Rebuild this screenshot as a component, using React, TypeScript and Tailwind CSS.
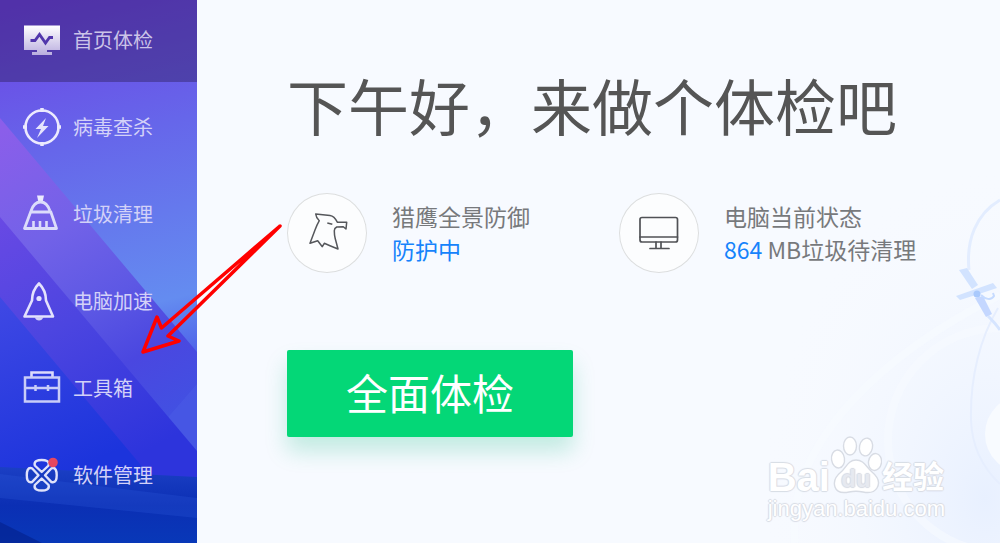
import type { ReactNode } from "react";

const iconStroke = {
  fill: "none",
  stroke: "#dcdcfb",
  strokeWidth: 2.6,
  strokeLinejoin: "round" as const,
};

function CheckupIcon() {
  return (
    <svg viewBox="0 0 40 40" className="size-10" aria-hidden="true">
      <defs>
        <linearGradient id="screen" x1="0" y1="0" x2="0" y2="1">
          <stop offset="0" stopColor="#ffffff" />
          <stop offset="1" stopColor="#b9addf" />
        </linearGradient>
      </defs>
      <path d="M2 5.500h36v24.500H25v2h5v3H10v-3h5v-2H2z" fill="url(#screen)" />
      <path d="M8.500 20.500h4.500l4.500-6 6 8.500 4-5.500h3.500" fill="none" stroke="#5136ac" strokeWidth="2.800" />
    </svg>
  );
}

function VirusIcon() {
  return (
    <svg viewBox="0 0 40 40" className="size-10" aria-hidden="true">
      <circle cx="20" cy="20" r="16.500" {...iconStroke} stroke="#eceafe" />
      <path d="M20 1v4M20 35v4M1 20h4M35 20h4" {...iconStroke} strokeWidth="3.500" stroke="#eceafe" />
      <path d="M24 11 13.500 22h5.500l-4 9L26.500 19H21z" fill="#e6e4fd" />
    </svg>
  );
}

function BroomIcon() {
  return (
    <svg viewBox="0 0 40 40" className="size-10" aria-hidden="true">
      <path d="M15 1.500h7l-1.500 7h-4z" fill="#eceafe" />
      <path d="M9 17c2-6 5-9 9.500-9s7.500 3 9.500 9M8.500 18h20M9 17 2.500 34.500h32L28.500 17" {...iconStroke} strokeWidth="2.800" />
      <path d="M11.500 27v7M18 27v7M24.500 27v7" {...iconStroke} />
    </svg>
  );
}

function RocketIcon() {
  return (
    <svg viewBox="0 0 40 40" className="size-10" aria-hidden="true">
      <path
        d="M17 2.500c-5 5-7 10-7 17L2.500 35.500h28.500L24 19.500c0-7-2-12-7-17z"
        {...iconStroke}
        stroke="#e4e2fd"
      />
      <circle cx="17" cy="17.500" r="2.600" fill="#e4e2fd" />
      <path d="M12.500 36h9q-1.500 3.500-4.500 3.500t-4.500-3.500z" fill="#d3d0f8" />
    </svg>
  );
}

function ToolboxIcon() {
  return (
    <svg viewBox="0 0 40 40" className="size-10" aria-hidden="true">
      <path d="M9.500 9.500V4.500h21v5" {...iconStroke} strokeLinejoin="miter" />
      <path
        d="M3 9.500h34V33.500H3zM3 20h34M13.500 17v6M26 17v6"
        {...iconStroke}
        strokeWidth="2.500"
        strokeLinejoin="miter"
        stroke="#c9cdf8"
      />
    </svg>
  );
}

function SoftwareIcon() {
  return (
    <svg viewBox="0 0 40 40" className="size-10" aria-hidden="true">
      <g {...iconStroke} strokeWidth="2.400" stroke="#dfe2fb">
        <path d="M19.700 17 12.800 10.500C11.500 6 16 5 19.700 5s8.200 1 6.900 5.500z" />
        <path d="M19.700 23.500 12.800 30C11.500 34.500 16 35.500 19.700 35.500s8.200-1 6.900-5.500z" />
        <path d="M16.500 20.200 10 13.300C5.500 12 4.800 16.500 4.800 20.200s.7 8.200 5.200 6.900z" />
        <path d="M23 20.200l6.500-6.900c4.500-1.300 5.200 3.200 5.200 6.900s-.7 8.200-5.200 6.900z" />
      </g>
      <circle cx="31" cy="7.500" r="4.800" fill="#e7475f" />
    </svg>
  );
}

const navItems: { label: string; icon: ReactNode }[] = [
  { label: "病毒查杀", icon: <VirusIcon /> },
  { label: "垃圾清理", icon: <BroomIcon /> },
  { label: "电脑加速", icon: <RocketIcon /> },
  { label: "工具箱", icon: <ToolboxIcon /> },
  { label: "软件管理", icon: <SoftwareIcon /> },
];

function SidebarArt() {
  return (
    <svg
      viewBox="0 0 197 543"
      preserveAspectRatio="none"
      className="absolute inset-0 size-full"
      aria-hidden="true"
    >
      <defs>
        <linearGradient id="sky" gradientUnits="userSpaceOnUse" x1="40" y1="0" x2="160" y2="480">
          <stop offset="0" stopColor="#6d42e4" />
          <stop offset="0.3" stopColor="#6666ea" />
          <stop offset="0.65" stopColor="#648cf0" />
          <stop offset="0.78" stopColor="#4c5ee8" />
          <stop offset="1" stopColor="#2f3fdc" />
        </linearGradient>
        <linearGradient id="bandA" gradientUnits="userSpaceOnUse" x1="0" y1="130" x2="160" y2="420">
          <stop offset="0" stopColor="#8b5eea" />
          <stop offset="0.35" stopColor="#7262e8" />
          <stop offset="0.6" stopColor="#5d58e4" />
          <stop offset="0.8" stopColor="#4a47e0" />
          <stop offset="1" stopColor="#4250e2" />
        </linearGradient>
        <linearGradient id="bandB" gradientUnits="userSpaceOnUse" x1="0" y1="220" x2="130" y2="460">
          <stop offset="0" stopColor="#6849e4" />
          <stop offset="0.45" stopColor="#4c45e0" />
          <stop offset="1" stopColor="#2d34dc" />
        </linearGradient>
        <linearGradient id="bandC" gradientUnits="userSpaceOnUse" x1="0" y1="300" x2="70" y2="470">
          <stop offset="0" stopColor="#3f48e4" />
          <stop offset="1" stopColor="#1c34dc" />
        </linearGradient>
        <linearGradient id="sea" x1="0" y1="0" x2="0" y2="1">
          <stop offset="0" stopColor="#1b3fc4" />
          <stop offset="0.5" stopColor="#0b2fb4" />
          <stop offset="1" stopColor="#0838b8" />
        </linearGradient>
      </defs>
      <path d="M0 0h197v543H0z" fill="url(#sky)" />
      <path d="M0 118 197 352V543H0z" fill="url(#bandA)" />
      <path d="M197 384 138 452 197 480z" fill="#5468ea" opacity="0.25" />
      <path d="M0 217 197 451V543H0z" fill="url(#bandB)" />
      <path d="M0 297 150 476V543H0z" fill="url(#bandC)" />
      <path d="M0 467 197 477v66H0z" fill="url(#sea)" />
      <path d="M0 474 197 498v20L0 498z" fill="#2a55d6" opacity="0.3" />
      <path d="M0 522 42 543H0z" fill="#03208a" opacity="0.6" />
    </svg>
  );
}

function MainArt() {
  return (
    <svg viewBox="0 0 300 543" className="absolute top-0 right-0 w-[300px]" fill="none" aria-hidden="true">
      <defs>
        <radialGradient id="glow" cx="0.95" cy="0.9" r="0.75">
          <stop offset="0" stopColor="#e8f0ff" />
          <stop offset="1" stopColor="#f7faff" stopOpacity="0" />
        </radialGradient>
      </defs>
      <path d="M0 100h300v443H0z" fill="url(#glow)" />
      <path d="M95 543C84 440 190 350 300 295" stroke="#f8fbff" strokeWidth="8" opacity="0.5" />
      <circle cx="300" cy="440" r="112" stroke="#f7faff" strokeWidth="8" opacity="0.6" />
      <circle cx="324" cy="434" r="39" fill="#f8fbff" />
      <path d="M300 200c-24 14-34 40-31 70" stroke="#e3edff" strokeWidth="3" />
      <path d="M298 308c-18 30-28 70-27 112 1 30 14 50 29 64" stroke="#e6eefe" strokeWidth="2" />
      <path d="M288 316c4 4 8 8 12 14" stroke="#d6e5ff" strokeWidth="3" />
      <path d="M259 270l8-2 11 17-6 4z" fill="#d2e3ff" />
      <path d="M275 298l8-2 9 18-6 3z" fill="#c4d7ff" />
      <path d="M256 296l17-6 20-7 4 5-18 6-19 6z" fill="#d2e3ff" />
      <circle cx="277" cy="294" r="3.500" fill="#a9c9fc" />
      <path d="M281 295c4 4 10 6 13 1l-1-3" stroke="#c6dbff" strokeWidth="2" />
    </svg>
  );
}

function EagleIcon() {
  return (
    <svg viewBox="0 0 80 80" className="size-20" fill="none" stroke="#55575b" strokeWidth="1.500" strokeLinejoin="round" aria-hidden="true">
      <path d="M28.700 21 43 22.500c4 .5 5.500 3 7.300 6.700h9.400L59 36l-2.700-2.300-6.600.3c-1.700.8-2.400 2-2.400 3.700 0 3 .2 5 .9 7.800L51 56l-8-3.300-5.700-2.400-2 3.400-4.600-6-7.700 2.600L28 37c1.500-4 3-7 4.300-9.300-2-1.700-3.300-4-3.600-6.700z" />
      <path d="M40.300 30l5 1.300" />
    </svg>
  );
}

function MonitorIcon() {
  return (
    <svg viewBox="0 0 80 80" className="size-20" fill="none" stroke="#505256" strokeWidth="1.700" strokeLinecap="round" aria-hidden="true">
      <rect x="21" y="24.500" width="37.500" height="24.500" rx="2" />
      <path d="M21 44h37.500M37 49v6M42 49v6M31 55.500h19" />
    </svg>
  );
}

function Status({ icon, title, children }: { icon: ReactNode; title: string; children: ReactNode }) {
  return (
    <section className="flex items-center gap-[25px]">
      <div className="size-20 shrink-0 rounded-full bg-[#fcfdfe] shadow-[inset_0_0_0_1px_#dcdedf]">{icon}</div>
      <div className="text-[23px] leading-[33px] whitespace-nowrap text-[#77797c]">
        <h2>{title}</h2>
        <p>{children}</p>
      </div>
    </section>
  );
}

function Watermark() {
  return (
    <div className="absolute right-[55px] bottom-[19px] text-white [text-shadow:1px_0_1px_#d8dce4,-1px_0_1px_#d8dce4,0_1px_1px_#d8dce4,0_-1px_1px_#d8dce4]">
      <div className="flex items-end">
        <span className="font-['Liberation_Sans'] text-[40px] leading-[34px] font-bold">Bai</span>
        <div className="relative h-[58px] w-[52px]">
          <svg viewBox="0 0 52 58" className="size-full" fill="#fff" stroke="#d8dce4" strokeWidth="1.400" aria-hidden="true">
            <ellipse cx="8" cy="23" rx="6.500" ry="9" transform="rotate(-8 8 23)" />
            <ellipse cx="20" cy="10" rx="6.500" ry="9" />
            <ellipse cx="36" cy="11" rx="6.500" ry="9" transform="rotate(12 36 11)" />
            <ellipse cx="45" cy="26" rx="6.500" ry="8.500" transform="rotate(8 45 26)" />
            <path d="M26 24c8 0 10 7 16 12s8 11 5 16-9 5-14 4-9-1-14 0-12 1-14-5 1-11 6-15 7-12 15-12z" />
          </svg>
          <span className="absolute inset-x-0 bottom-[3px] text-center font-['Liberation_Sans'] text-[24px] leading-6 font-bold text-[#e6e9f0]">
            du
          </span>
        </div>
        <span className="text-[31px] leading-[38px] font-bold">经验</span>
      </div>
      <div className="font-['Liberation_Sans'] text-[22px] leading-[30px]">jingyan.baidu.com</div>
    </div>
  );
}

export default function App() {
  return (
    <div className="relative flex min-h-screen overflow-hidden bg-[#f7faff] font-['Noto_Sans_CJK_SC',sans-serif]">
      <aside className="relative w-[197px] shrink-0 text-[20px] text-[#d3d1f8]">
        <SidebarArt />
        <nav className="relative">
          <a
            href="#checkup"
            aria-current="page"
            className="mb-0.5 flex h-[82px] items-center gap-[11px] bg-[#281a50]/40 pb-0.5 pl-[22px] text-[#cbc3e8]"
          >
            <CheckupIcon />
            首页体检
          </a>
          {navItems.map((item) => (
            <a key={item.label} href="#tools" className="flex h-[87px] items-center gap-[11px] pb-0.5 pl-[22px]">
              {item.icon}
              {item.label}
            </a>
          ))}
        </nav>
      </aside>

      <main className="relative flex-1 pt-[61px] pl-[90px]">
        <MainArt />
        <div className="relative">
          <h1 className="text-[61px] leading-[88px] whitespace-nowrap text-[#555555]">下午好，来做个体检吧</h1>
          <div className="mt-[44px] flex gap-[89px]">
            <Status icon={<EagleIcon />} title="猎鹰全景防御">
              <span className="text-[#1683fb]">防护中</span>
            </Status>
            <Status icon={<MonitorIcon />} title="电脑当前状态">
              <span className="text-[#1683fb]">864</span> MB垃圾待清理
            </Status>
          </div>
          <button
            type="button"
            className="mt-[77px] h-[87px] w-[286px] rounded-xs bg-[#04d777] pb-1 text-[42px] text-white shadow-[0_14px_22px_#04b87738]"
          >
            全面体检
          </button>
        </div>
        <Watermark />
      </main>

      <svg
        viewBox="0 0 150 136"
        className="pointer-events-none absolute top-[221px] left-[136px] w-[150px]"
        fill="none"
        stroke="#f00"
        strokeWidth="3.500"
        strokeLinejoin="round"
        aria-hidden="true"
      >
        <path d="M7 131 21 96 25.500 107 144 5 32 115 43 120z" />
      </svg>
    </div>
  );
}
